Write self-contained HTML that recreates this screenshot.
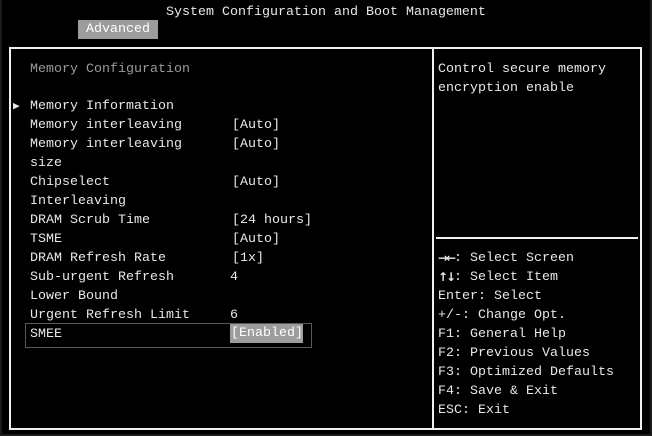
<!DOCTYPE html>
<html><head><meta charset="utf-8"><style>
*{margin:0;padding:0;box-sizing:border-box}
html,body{width:652px;height:436px;background:#000;overflow:hidden}
body{position:relative;font-family:"Liberation Mono","DejaVu Sans Mono",monospace;font-size:13.33px;color:#e8e8e8}
.t{position:absolute;white-space:pre;line-height:18px;height:18px}
.m{position:absolute;left:0;top:2px;width:652px;height:436px}
.frame{position:absolute;left:9px;top:47px;width:633px;height:383px;border:2px solid #f0f0f0}
.div{position:absolute;left:432px;top:47px;width:2px;height:383px;background:#f0f0f0}
.hl{position:absolute;left:436px;top:237px;width:202px;height:2px;background:#f0f0f0}
.edge{position:absolute;left:0;top:0;width:652px;height:436px;border:2px solid #1c1c1c;border-top:none}
.ar{display:inline-block;vertical-align:top;line-height:17px;height:18px;font-family:"DejaVu Sans",sans-serif;font-weight:bold;font-size:12px;letter-spacing:-2px;width:16px}
</style></head><body>
<div class="edge"></div>
<div class="frame"></div>
<div class="div"></div>
<div class="hl"></div>
<div style="position:absolute;left:25px;top:323px;width:287px;height:25px;border:1px solid #ff1020"></div>
<div class="m">
<div class="t" style="left:166px;top:2px">System Configuration and Boot Management</div>
<div class="t" style="left:78px;top:18px;width:80px;height:19px;background:#9c9c9c;color:#fff;padding-left:8px;line-height:20px">Advanced</div>
<div class="t" style="left:30px;top:59px;color:#9a9a9a">Memory Configuration</div>
<div class="t" style="left:13px;top:96px;font-size:11px">&#9654;</div>
<div class="t" style="left:30px;top:96px">Memory Information</div>
<div class="t" style="left:30px;top:115px">Memory interleaving</div><div class="t" style="left:232px;top:115px">[Auto]</div>
<div class="t" style="left:30px;top:134px">Memory interleaving</div><div class="t" style="left:232px;top:134px">[Auto]</div>
<div class="t" style="left:30px;top:153px">size</div>
<div class="t" style="left:30px;top:172px">Chipselect</div><div class="t" style="left:232px;top:172px">[Auto]</div>
<div class="t" style="left:30px;top:191px">Interleaving</div>
<div class="t" style="left:30px;top:210px">DRAM Scrub Time</div><div class="t" style="left:232px;top:210px">[24 hours]</div>
<div class="t" style="left:30px;top:229px">TSME</div><div class="t" style="left:232px;top:229px">[Auto]</div>
<div class="t" style="left:30px;top:248px">DRAM Refresh Rate</div><div class="t" style="left:232px;top:248px">[1x]</div>
<div class="t" style="left:30px;top:267px">Sub-urgent Refresh</div><div class="t" style="left:230px;top:267px">4</div>
<div class="t" style="left:30px;top:286px">Lower Bound</div>
<div class="t" style="left:30px;top:305px">Urgent Refresh Limit</div><div class="t" style="left:230px;top:305px">6</div>
<div class="t" style="left:30px;top:324px">SMEE</div>
<div class="t" style="left:230px;top:322px;width:73px;height:19px;background:#9c9c9c;color:#fff;padding-left:1px;line-height:20px">[Enabled]</div>
<div class="t" style="left:438px;top:59px">Control secure memory</div>
<div class="t" style="left:438px;top:78px">encryption enable</div>
<div class="t" style="left:438px;top:248px"><span class="ar">&#8594;&#8592;</span>: Select Screen</div>
<div class="t" style="left:438px;top:267px"><span class="ar">&#8593;&#8595;</span>: Select Item</div>
<div class="t" style="left:438px;top:286px">Enter: Select</div>
<div class="t" style="left:438px;top:305px">+/-: Change Opt.</div>
<div class="t" style="left:438px;top:324px">F1: General Help</div>
<div class="t" style="left:438px;top:343px">F2: Previous Values</div>
<div class="t" style="left:438px;top:362px">F3: Optimized Defaults</div>
<div class="t" style="left:438px;top:381px">F4: Save &amp; Exit</div>
<div class="t" style="left:438px;top:400px">ESC: Exit</div>
</div>
</body></html>
